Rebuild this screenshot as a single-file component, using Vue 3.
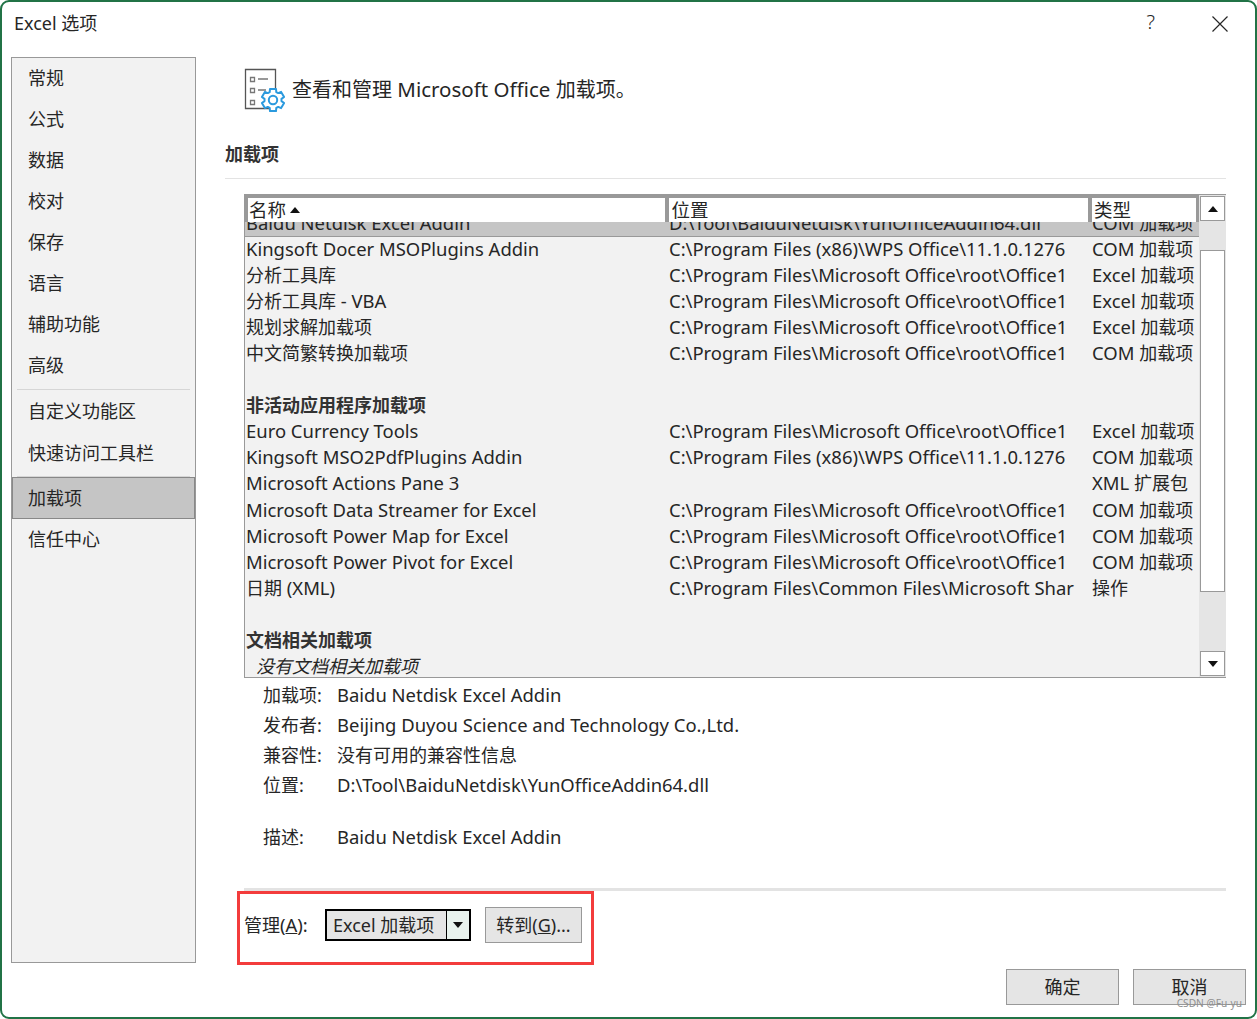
<script setup>
import { h } from 'vue'

const navA = ['常规', '公式', '数据', '校对', '保存', '语言', '辅助功能', '高级']
const navB = ['自定义功能区', '快速访问工具栏']
const o = 'C:\\Program Files\\Microsoft Office\\root\\Office1'
const w = 'C:\\Program Files (x86)\\WPS Office\\11.1.0.1276'
const rows = [
  { k: 'sel', n: 'Baidu Netdisk Excel Addin', p: 'D:\\Tool\\BaiduNetdisk\\YunOfficeAddin64.dll', t: 'COM 加载项' },
  { n: 'Kingsoft Docer MSOPlugins Addin', p: w, t: 'COM 加载项' },
  { n: '分析工具库', p: o, t: 'Excel 加载项' },
  { n: '分析工具库 - VBA', p: o, t: 'Excel 加载项' },
  { n: '规划求解加载项', p: o, t: 'Excel 加载项' },
  { n: '中文简繁转换加载项', p: o, t: 'COM 加载项' },
  { n: '' },
  { k: 'head', n: '非活动应用程序加载项' },
  { n: 'Euro Currency Tools', p: o, t: 'Excel 加载项' },
  { n: 'Kingsoft MSO2PdfPlugins Addin', p: w, t: 'COM 加载项' },
  { n: 'Microsoft Actions Pane 3', p: '', t: 'XML 扩展包' },
  { n: 'Microsoft Data Streamer for Excel', p: o, t: 'COM 加载项' },
  { n: 'Microsoft Power Map for Excel', p: o, t: 'COM 加载项' },
  { n: 'Microsoft Power Pivot for Excel', p: o, t: 'COM 加载项' },
  { n: '日期 (XML)', p: 'C:\\Program Files\\Common Files\\Microsoft Shar', t: '操作' },
  { n: '' },
  { k: 'head', n: '文档相关加载项' },
  { k: 'none', n: '没有文档相关加载项' }
]
const details = [
  { l: '加载项:', v: 'Baidu Netdisk Excel Addin' },
  { l: '发布者:', v: 'Beijing Duyou Science and Technology Co.,Ltd.' },
  { l: '兼容性:', v: '没有可用的兼容性信息' },
  { l: '位置:', v: 'D:\\Tool\\BaiduNetdisk\\YunOfficeAddin64.dll' }
]

/* Latin runs sit slightly larger than CJK runs, as in the dialog's UI font. */
const T = (props) =>
  String(props.s || '')
    .split(/([\u3000-\u9fff]+)/)
    .filter(Boolean)
    .map((run) => (/[\u3000-\u9fff]/.test(run) ? run : h('span', { class: 'lat' }, run)))
T.props = ['s']

function gearPath(cx, cy, R, r) {
  const pts = []
  for (let i = 0; i < 6; i++) {
    const a = (i * Math.PI) / 3 - Math.PI / 2
    const s = 0.26
    const m = 0.4
    pts.push([cx + r * Math.cos(a - m), cy + r * Math.sin(a - m)])
    pts.push([cx + R * Math.cos(a - s), cy + R * Math.sin(a - s)])
    pts.push([cx + R * Math.cos(a + s), cy + R * Math.sin(a + s)])
    pts.push([cx + r * Math.cos(a + m), cy + r * Math.sin(a + m)])
  }
  return 'M' + pts.map((p) => p[0].toFixed(1) + ' ' + p[1].toFixed(1)).join('L') + 'Z'
}
const gear = gearPath(29, 32, 11.5, 8.6)
</script>

<template>
  <div class="dialog">
    <header class="titlebar">
      <span class="title">Excel 选项</span>
      <span class="help">?</span>
      <svg class="close" width="16" height="16" viewBox="0 0 16 16">
        <path d="M.5.5l15 15M15.500.5l-15 15" stroke="#262626" stroke-width="1.200" fill="none" />
      </svg>
    </header>

    <div class="body">
      <nav class="nav">
        <div v-for="n in navA" :key="n" class="nav-item">{{ n }}</div>
        <div class="nav-sep first"></div>
        <div v-for="n in navB" :key="n" class="nav-item custom">{{ n }}</div>
        <div class="nav-sep second"></div>
        <div class="nav-item active">加载项</div>
        <div class="nav-item">信任中心</div>
      </nav>

      <main class="main">
        <div class="lead">
          <svg class="lead-icon" width="42" height="46" viewBox="0 0 42 46">
            <path d="M1.500 1.500h30v39h-30z" fill="#fff" stroke="#555" stroke-width="1.300" />
            <path d="M6.500 9.500h4v4h-4zM6.500 20.500h4v4h-4zM6.500 32.500h4v4h-4z" fill="none" stroke="#777" stroke-width="1.300" />
            <path d="M14 11h10M14 22h8" stroke="#777" stroke-width="1.300" />
            <path :d="gear" fill="#fff" stroke="#2b9ade" stroke-width="2" stroke-linejoin="round" />
            <circle cx="29" cy="32" r="4.200" fill="#fff" stroke="#2b9ade" stroke-width="2" />
          </svg>
          <span class="lead-text"><T s="查看和管理 Microsoft Office 加载项。" /></span>
        </div>
        <h2 class="section">加载项</h2>
        <div class="rule"></div>

        <div class="inset">
          <div class="listbox">
            <div class="table">
              <div class="thead">
                <div class="th c1">名称<i class="sort"></i></div>
                <div class="th c2">位置</div>
                <div class="th c3">类型</div>
              </div>
              <div class="tbody">
                <div v-for="(r, i) in rows" :key="i" class="row" :class="r.k">
                  <span class="n"><T :s="r.n" /></span>
                  <span class="p"><T :s="r.p" /></span>
                  <span class="t"><T :s="r.t" /></span>
                </div>
              </div>
            </div>
            <div class="scroll">
              <div class="sbtn"><i class="tri up"></i></div>
              <div class="thumb"></div>
              <div class="sbtn down"><i class="tri dn"></i></div>
            </div>
          </div>

          <dl class="details">
            <div v-for="d in details" :key="d.l" class="dline">
              <dt>{{ d.l }}</dt>
              <dd><T :s="d.v" /></dd>
            </div>
            <div class="dline desc">
              <dt>描述:</dt>
              <dd><T s="Baidu Netdisk Excel Addin" /></dd>
            </div>
          </dl>

          <div class="thick"></div>

          <div class="manage">
            <span class="mlabel">管理<span class="lat">(<u>A</u>):</span></span>
            <div class="combo">
              <span class="cval">Excel 加载项</span>
              <span class="carrow"><i class="tri dn"></i></span>
            </div>
            <button class="btn go">转到(<u>G</u>)...</button>
          </div>
        </div>
      </main>
    </div>

    <footer class="footer">
      <button class="btn foot">确定</button>
      <button class="btn foot">取消</button>
    </footer>
    <span class="mark">CSDN @Fu-yu</span>
  </div>
</template>

<style>
html, body { margin: 0; background: #fff; }
.lat { font-size: 1.025em; }
</style>

<style scoped>
.dialog {
  position: relative;
  box-sizing: border-box;
  width: 1257px;
  height: 1019px;
  overflow: hidden;
  display: flex;
  flex-direction: column;
  background: #fff;
  border: 2px solid #217346;
  border-radius: 9px;
  color: #262626;
  font-family: "Noto Sans", "Noto Sans CJK SC", sans-serif;
  font-size: 18px;
  line-height: 26px;
}
.titlebar {
  height: 55px;
  flex: none;
  display: flex;
  align-items: flex-start;
  padding: 8px 27px 0 12px;
  box-sizing: border-box;
}
.title { flex: 1; }
.help { font-size: 20px; line-height: 24px; margin-right: 57px; font-weight: 300; }
.close { margin-top: 6px; }

.body { flex: none; height: 906px; display: flex; }
.nav {
  position: relative;
  margin-left: 9px;
  box-sizing: border-box;
  width: 185px;
  height: 906px;
  background: #f2f2f2;
  border: 1px solid #999;
}
.nav-item {
  height: 41px;
  line-height: 41px;
  padding-left: 16px;
}
.nav-sep { height: 1px; margin: 0 5px; background: #d6d6d6; }
.nav-sep.first { margin-top: 3px; }
.custom { margin-top: 1px; }
.nav-sep.second { margin-top: 2px; }
.active {
  height: 42px;
  line-height: 40px;
  box-sizing: border-box;
  background: #c5c5c5;
  border: 1px solid #888;
  padding-left: 15px;
}

.main { width: 1001px; margin-left: 29px; }
.lead { display: flex; align-items: flex-start; height: 60px; padding-top: 10px; margin-left: 19px; box-sizing: border-box; }
.lead-icon { flex: none; margin-right: 6px; margin-top: 1px; }
.lead-text { font-size: 20px; line-height: 28px; margin-top: 8px; }
.section { margin: 24px 0 0; font-size: 18px; font-weight: 700; line-height: 26px; color: #333; }
.rule { height: 1px; background: #e3e3e3; margin-top: 11px; }
.inset { margin-left: 19px; }

.listbox {
  margin-top: 15px;
  display: flex;
  box-sizing: border-box;
  width: 982px;
  height: 484px;
  border: 1px solid #999;
}
.table { width: 954px; flex: none; overflow: hidden; background: #f2f2f2; }
.thead {
  position: relative;
  z-index: 1;
  height: 27px;
  box-sizing: border-box;
  display: flex;
  gap: 4px;
  padding: 3px 3px 0;
  background: #999;
}
.th {
  background: #fff;
  height: 24px;
  line-height: 24px;
  box-sizing: border-box;
  font-size: 18.500px;
  display: flex;
  align-items: center;
  overflow: hidden;
}
.c1 { width: 417px; padding-left: 1px; }
.c2 { width: 420px; padding-left: 3px; }
.c3 { width: 104px; padding-left: 2px; }
.sort {
  display: inline-block;
  width: 0;
  height: 0;
  margin-left: 4px;
  border-left: 5.500px solid transparent;
  border-right: 5.500px solid transparent;
  border-bottom: 6px solid #111;
}
.tbody { margin-top: -12px; height: 468px; overflow: hidden; }
.row {
  display: flex;
  height: 26.060px;
  line-height: 26px;
  white-space: nowrap;
  box-sizing: border-box;
  padding-left: 1px;
}
.n { width: 423px; flex: none; }
.p { width: 423px; flex: none; overflow: hidden; }
.t { flex: none; }
.row.sel { height: 27px; margin-bottom: -0.940px; background: #c5c5c5; border-bottom: 1px solid #999; }
.row.head .n { font-weight: 700; color: #333; }
.row.none .n { font-style: italic; padding-left: 10px; box-sizing: border-box; }

.scroll {
  width: 27px;
  flex: none;
  background: #e5e5e5;
  box-sizing: border-box;
  padding: 1px;
  display: flex;
  flex-direction: column;
}
.sbtn {
  height: 25px;
  flex: none;
  box-sizing: border-box;
  background: #fff;
  border: 1px solid #999;
  display: flex;
  align-items: center;
  justify-content: center;
}
.thumb {
  margin-top: 29px;
  height: 342px;
  flex: none;
  box-sizing: border-box;
  background: #fff;
  border: 1px solid #999;
}
.sbtn.down { margin-top: auto; }
.tri { display: block; width: 0; height: 0; border-left: 5.500px solid transparent; border-right: 5.500px solid transparent; }
.tri.up { border-bottom: 6px solid #111; }
.tri.dn { border-top: 6px solid #111; }

.details { margin: 4px 0 0 19px; height: 171px; }
.dline { display: flex; height: 30px; line-height: 26px; }
.dline dt { width: 74px; flex: none; }
.dline dd { margin: 0; }
.dline.desc { margin-top: 22px; }

.thick { height: 3px; background: #e3e3e3; margin-top: 35px; }
.manage {
  display: flex;
  align-items: center;
  box-sizing: border-box;
  width: 357px;
  height: 74px;
  margin-left: -7px;
  border: 3px solid #f33c3c;
  padding-left: 4px;
}
.mlabel { width: 81px; flex: none; margin-top: -6px; }
.combo {
  display: flex;
  width: 146px;
  height: 32px;
  flex: none;
  box-sizing: border-box;
  border: 2px solid #000;
  background: #e5e5e5;
  margin-top: -6px;
}
.cval { flex: 1; line-height: 28px; padding-left: 6px; }
.carrow {
  width: 23px;
  flex: none;
  box-sizing: border-box;
  border-left: 1px solid #000;
  background: #e9f3ee;
  display: flex;
  align-items: center;
  justify-content: center;
}
.btn {
  display: block;
  box-sizing: border-box;
  background: #e5e5e5;
  border: 1px solid #999;
  color: #262626;
  font: inherit;
  line-height: 26px;
  padding: 0;
}
.go { width: 97px; height: 36px; margin-left: 14px; margin-top: -6px; }
.footer {
  flex: none;
  display: flex;
  gap: 14px;
  justify-content: flex-end;
  padding: 6px 9px 0 0;
}
.foot { width: 113px; height: 36px; }
.mark {
  position: absolute;
  right: 13px;
  bottom: 7px;
  font-size: 10.200px;
  line-height: 13px;
  color: #8f8f8f;
}
</style>
